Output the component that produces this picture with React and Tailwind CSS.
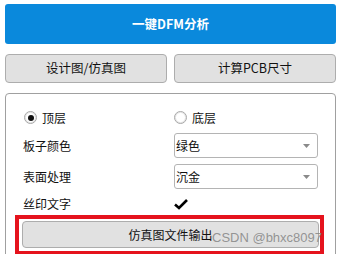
import React from "react";

const cjk = { fontFamily: '"Noto Sans CJK SC", "Noto Sans", sans-serif' };

function Radio({ checked, label }) {
  return (
    <div className="flex items-center h-[17px]">
      <span className="w-[13px] h-[13px] rounded-full border border-[#a8a8a8] bg-white flex items-center justify-center shadow-[inset_0_0_0_1px_#e6e6e6]">
        {checked && <span className="w-[6px] h-[6px] rounded-full bg-[#111]" />}
      </span>
      <span className="ml-[5px] text-[12px] leading-[17px] text-[#111]">{label}</span>
    </div>
  );
}

function Combo({ value }) {
  return (
    <div className="w-[144px] h-[25px] border border-[#b4b4b4] rounded-[3px] bg-white flex items-center justify-between pl-[1px] pr-[7px]">
      <span className="text-[12px] leading-[16px] text-[#111]">{value}</span>
      <svg width="7" height="4" viewBox="0 0 7 4">
        <path d="M0 0 L7 0 L3.5 4 Z" fill="#8a8a8a" />
      </svg>
    </div>
  );
}

export default function App() {
  return (
    <div className="w-[339px] h-[254px] bg-white overflow-hidden pl-[5px] pr-[3px] pt-[4px] relative" style={cjk}>
      <div className="w-[331px] h-[40px] bg-[#0a89dc] rounded-[3px] flex items-center justify-center text-white font-bold text-[12.5px]">
        一键DFM分析
      </div>
      <div className="mt-[10px] flex gap-[7px]">
        <div className="w-[162px] h-[29px] bg-[#e1e1e1] border border-[#adadad] rounded-[4px] flex items-center justify-center text-[12.5px] text-[#111]">
          设计图/仿真图
        </div>
        <div className="w-[162px] h-[29px] bg-[#e1e1e1] border border-[#adadad] rounded-[4px] flex items-center justify-center text-[12.5px] text-[#111]">
          计算PCB尺寸
        </div>
      </div>
      <div className="mt-[10px] w-[331px] h-[200px] border border-[#a0a0a0] rounded-[4px] pt-[15px] pl-[17px]">
        <div className="flex h-[17px]">
          <div className="w-[151px] pl-[1px]">
            <Radio checked label="顶层" />
          </div>
          <div>
            <Radio label="底层" />
          </div>
        </div>
        <div className="mt-[7px] flex items-center h-[25px]">
          <span className="w-[151px] text-[12px] text-[#111]">板子颜色</span>
          <Combo value="绿色" />
        </div>
        <div className="mt-[6px] flex items-center h-[25px]">
          <span className="w-[151px] text-[12px] text-[#111]">表面处理</span>
          <Combo value="沉金" />
        </div>
        <div className="mt-[7px] flex items-center h-[16px]">
          <span className="w-[151px] text-[12px] text-[#111]">丝印文字</span>
          <svg width="14" height="11" viewBox="0 0 14 11">
            <path d="M1 5.5 L5 9 L13 1" fill="none" stroke="#000" strokeWidth="2.6" />
          </svg>
        </div>
        <div className="mt-[3px] -ml-[8px] w-[309px] h-[40px] border-[4px] border-[#e5131d] pt-[2px] pl-[3px]">
          <div className="w-[297px] h-[27px] bg-[#e1e1e1] border border-[#adadad] rounded-[4px] flex items-center justify-center text-[12px] text-[#111]">
            仿真图文件输出
          </div>
        </div>
      </div>
      <div
        className="absolute left-[212px] top-[229px] text-[13px] leading-[17px] text-[#8a8a8a]/90"
        style={{ fontFamily: '"Liberation Sans", Arial, sans-serif' }}
      >
        CSDN @bhxc8097
      </div>
    </div>
  );
}
